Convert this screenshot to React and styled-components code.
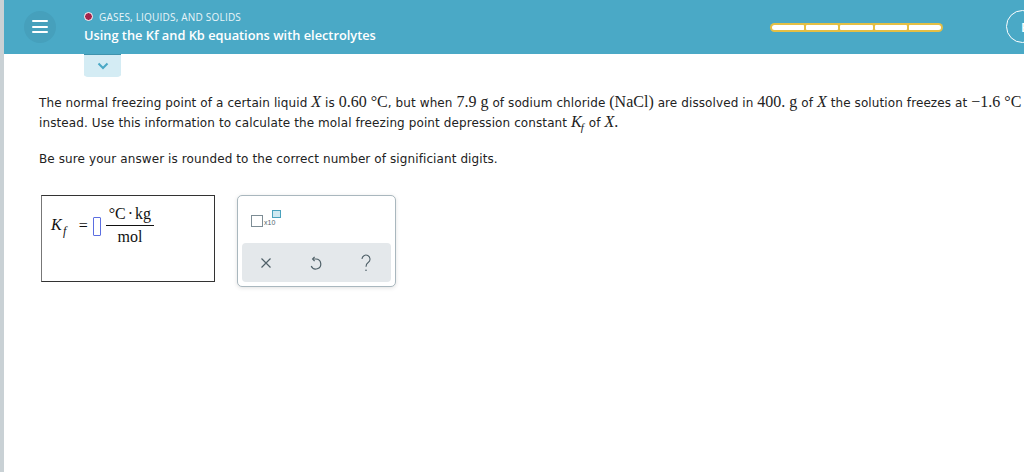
import React from "react";
import styled, { createGlobalStyle } from "styled-components";

const GlobalStyle = createGlobalStyle`
  html, body {
    margin: 0;
    padding: 0;
    background: #fff;
    overflow: hidden;
  }
  body {
    font-family: "DejaVu Sans", Verdana, sans-serif;
  }
`;

function ProgressBar({ segments }) {
  return (
    <Progress>
      {Array.from({ length: segments }).map((_, i) => (
        <Segment key={i} />
      ))}
    </Progress>
  );
}

function Toolbox() {
  return (
    <ToolCard>
      <ToolTop>
        <SciButton>
          <EmptyBox />
          <Times>x10</Times>
          <ExpBox />
        </SciButton>
      </ToolTop>
      <ToolActions>
        <ActionIcon title="clear">
          <svg width="14" height="14" viewBox="0 0 14 14">
            <path d="M2.5 2.5 L11.5 11.5 M11.5 2.5 L2.5 11.5" stroke="#4f6068" strokeWidth="1.2" fill="none" />
          </svg>
        </ActionIcon>
        <ActionIcon title="undo">
          <svg width="14" height="18" viewBox="0 0 14 18">
            <path d="M4 5 H6.5 A5 5 0 1 1 2.2 12" stroke="#4f6068" strokeWidth="1.2" fill="none" />
            <path d="M5.6 2.8 L3.6 5 L5.6 7.2" stroke="#4f6068" strokeWidth="1.2" fill="none" />
          </svg>
        </ActionIcon>
        <ActionIcon title="help">
          <svg width="14" height="20" viewBox="0 0 14 20">
            <path d="M3 6 A4 4 0 1 1 9.4 9.3 C7.7 10.5 7 11.4 7 13.8" stroke="#4f6068" strokeWidth="1.1" fill="none" />
            <circle cx="7" cy="17.2" r="0.8" fill="#4f6068" />
          </svg>
        </ActionIcon>
      </ToolActions>
    </ToolCard>
  );
}

export default function App() {
  return (
    <>
      <GlobalStyle />
      <Page>
        <SideStrip />
        <Main>
          <Header>
            <MenuButton>
              <Bar />
              <Bar />
              <Bar />
            </MenuButton>
            <TitleBlock>
              <Topic>
                <Dot />
                GASES, LIQUIDS, AND SOLIDS
              </Topic>
              <Title>Using the Kf and Kb equations with electrolytes</Title>
            </TitleBlock>
            <ProgressBar segments={5} />
            <ExplainButton>E</ExplainButton>
          </Header>
          <DropTab>
            <svg width="12" height="8" viewBox="0 0 12 8">
              <path d="M1.5 1.5 L6 6 L10.5 1.5" stroke="#4aa8c5" strokeWidth="2" fill="none" />
            </svg>
          </DropTab>
          <Content>
            <Para>
              The normal freezing point of a certain liquid <MI>X</MI> is <M>0.60 °C</M>, but when <M>7.9 g</M> of
              sodium chloride <M>(NaCl)</M> are dissolved in <M>400. g</M> of <MI>X</MI> the solution freezes at{" "}
              <M>−1.6 °C</M>
              <br />
              instead. Use this information to calculate the molal freezing point depression constant{" "}
              <MI>K</MI>
              <Sub>f</Sub> of <MI>X</MI>
              <M>.</M>
            </Para>
            <Note>Be sure your answer is rounded to the correct number of significiant digits.</Note>
            <AnswerRow>
              <AnswerBox>
                <Equation>
                  <KSym>
                    K<KSub>f</KSub>
                  </KSym>
                  <Equals>=</Equals>
                  <Cursor />
                  <Fraction>
                    <Num>
                      °C<DotOp>·</DotOp>kg
                    </Num>
                    <Den>mol</Den>
                  </Fraction>
                </Equation>
              </AnswerBox>
              <Toolbox />
            </AnswerRow>
          </Content>
        </Main>
      </Page>
    </>
  );
}

const Page = styled.div`
  display: flex;
  width: 1024px;
  height: 472px;
  overflow: hidden;
`;

const SideStrip = styled.div`
  width: 4px;
  flex-shrink: 0;
  background: #c9d1d5;
`;

const Main = styled.div`
  flex: 1;
  min-width: 0;
  display: flex;
  flex-direction: column;
`;

const Header = styled.div`
  height: 54px;
  flex-shrink: 0;
  background: #4aa9c6;
  display: flex;
  align-items: center;
  padding-left: 20px;
  position: relative;
`;

const MenuButton = styled.div`
  width: 32px;
  height: 32px;
  border-radius: 50%;
  background: #46a0bc;
  display: flex;
  flex-direction: column;
  align-items: center;
  justify-content: center;
  gap: 3.5px;
  margin-top: -1px;
`;

const Bar = styled.div`
  width: 16px;
  height: 2px;
  background: #fff;
  border-radius: 1px;
`;

const TitleBlock = styled.div`
  margin-left: 28px;
  display: flex;
  flex-direction: column;
  color: #fff;
  font-family: "Open Sans", "Liberation Sans", sans-serif;
  margin-top: -1px;
`;

const Topic = styled.div`
  display: flex;
  align-items: center;
  font-size: 10px;
  letter-spacing: 0.2px;
  color: #e9f5f9;
  line-height: 14px;
`;

const Dot = styled.span`
  width: 9px;
  height: 9px;
  border-radius: 50%;
  background: #a3234a;
  border: 1.5px solid #fff;
  margin-right: 6px;
  box-sizing: border-box;
`;

const Title = styled.div`
  font-size: 12.8px;
  line-height: 18px;
  font-weight: 600;
  margin-top: 2px;
`;

const Progress = styled.div`
  display: flex;
  gap: 2px;
  margin-left: auto;
  margin-right: 81px;
  margin-top: 1px;
  width: 173px;
  height: 9px;
  padding: 2px;
  box-sizing: border-box;
  border-radius: 5px;
  background: #e4bf45;
`;

const Segment = styled.div`
  flex: 1;
  background: #fff;
  border-radius: 1px;
  &:first-child {
    border-radius: 3px 1px 1px 3px;
  }
  &:last-child {
    border-radius: 1px 3px 3px 1px;
  }
`;

const ExplainButton = styled.div`
  position: absolute;
  left: 1002px;
  top: 10px;
  width: 33px;
  height: 33px;
  border-radius: 50%;
  border: 1px solid #fff;
  color: #fff;
  font-family: "Open Sans", "Liberation Sans", sans-serif;
  font-size: 13px;
  font-weight: 600;
  display: flex;
  align-items: center;
  padding-left: 14px;
  box-sizing: border-box;
`;

const DropTab = styled.div`
  margin-left: 80px;
  width: 37px;
  height: 23px;
  background: #d4ecf4;
  border-radius: 0 0 4px 4px;
  display: flex;
  align-items: center;
  justify-content: center;
  box-shadow: inset 0 1px 0 #3f93ad;
`;

const Content = styled.div`
  padding: 16px 0 0 35px;
  color: #222;
  font-size: 12px;
  letter-spacing: 0.1px;
`;

const Para = styled.p`
  margin: 0;
  line-height: 20px;
  white-space: nowrap;
`;

const M = styled.span`
  font-family: "Liberation Serif", "Times New Roman", serif;
  font-size: 16px;
  line-height: 1;
  letter-spacing: 0;
`;

const MI = styled(M)`
  font-style: italic;
`;

const Sub = styled.sub`
  font-family: "Liberation Serif", "Times New Roman", serif;
  font-style: italic;
  font-size: 11px;
  line-height: 1;
  vertical-align: -4px;
  margin-left: -1px;
  margin-right: 1px;
`;

const Note = styled.p`
  margin: 16px 0 0;
  line-height: 20px;
`;

const AnswerRow = styled.div`
  display: flex;
  align-items: flex-start;
  gap: 22px;
  margin-top: 26px;
  margin-left: 2px;
`;

const AnswerBox = styled.div`
  width: 174px;
  height: 87px;
  box-sizing: border-box;
  border: 1px solid #333;
  border-left-color: #777;
  padding: 9px 0 0 9px;
`;

const Equation = styled.div`
  display: flex;
  align-items: center;
  font-family: "Liberation Serif", "Times New Roman", serif;
  font-size: 16px;
  color: #111;
  letter-spacing: 0;
`;

const KSym = styled.span`
  font-style: italic;
  position: relative;
  padding-right: 6px;
  margin-top: -2px;
`;

const KSub = styled.span`
  position: absolute;
  font-size: 12px;
  left: 12px;
  top: 8px;
`;

const Equals = styled.span`
  margin-left: 11px;
  margin-right: 5px;
`;

const Cursor = styled.span`
  width: 6px;
  height: 17px;
  border: 1px solid #5b6ee1;
  border-radius: 1px;
  margin-right: 5px;
  margin-top: 1px;
`;

const Fraction = styled.span`
  display: inline-flex;
  flex-direction: column;
  align-items: center;
`;

const Num = styled.span`
  padding: 0 3px 2px;
  border-bottom: 1px solid #111;
  line-height: 18px;
`;

const DotOp = styled.span`
  margin: 0 2px;
`;

const Den = styled.span`
  line-height: 21px;
`;

const ToolCard = styled.div`
  width: 159px;
  height: 92px;
  box-sizing: border-box;
  border: 1px solid #a9b7be;
  border-radius: 5px;
  box-shadow: 0 1px 4px rgba(0, 0, 0, 0.12);
  padding: 4px;
  display: flex;
  flex-direction: column;
  background: #fff;
`;

const ToolTop = styled.div`
  height: 43px;
  display: flex;
  align-items: flex-start;
  padding: 10px 0 0 9px;
  box-sizing: border-box;
`;

const SciButton = styled.div`
  display: flex;
  align-items: flex-end;
  position: relative;
  margin-top: 5px;
`;

const EmptyBox = styled.span`
  width: 12px;
  height: 12px;
  border: 1.5px solid #7d8d95;
  box-sizing: border-box;
`;

const Times = styled.span`
  font-family: "Liberation Sans", Arial, sans-serif;
  font-size: 7px;
  color: #55666e;
  line-height: 8px;
  margin-left: 1px;
`;

const ExpBox = styled.span`
  position: absolute;
  left: 21px;
  top: -5px;
  width: 9px;
  height: 8px;
  background: #cfe9f1;
  border: 1.5px solid #4aa2bd;
  box-sizing: border-box;
`;

const ToolActions = styled.div`
  flex: 1;
  background: #e4e8eb;
  border-radius: 4px;
  display: flex;
  align-items: center;
  gap: 26px;
  padding: 0 0 0 12px;
`;

const ActionIcon = styled.span`
  width: 24px;
  display: flex;
  justify-content: center;
  align-items: center;
`;
